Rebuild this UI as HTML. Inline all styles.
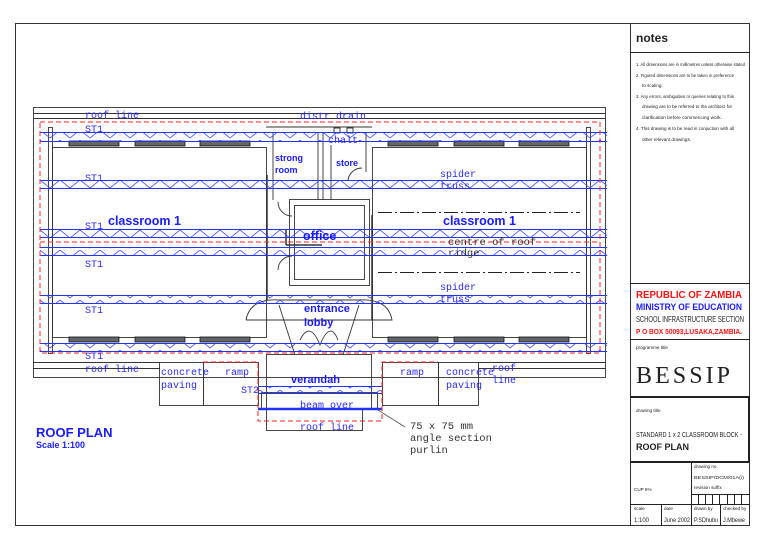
<!DOCTYPE html>
<html><head><meta charset="utf-8"><style>
html,body{margin:0;padding:0;background:#fff}
svg{display:block}
.b{fill:#1a1aff;font-family:"Liberation Sans",sans-serif}
.t{fill:#2a2aff;font-family:"Liberation Mono",monospace;font-size:10px}
.k{fill:#222;font-family:"Liberation Sans",sans-serif}
</style></head><body>
<svg width="768" height="543" viewBox="0 0 768 543" xmlns="http://www.w3.org/2000/svg">
<defs>
<pattern id="zz" x="40" y="0" width="20" height="10" patternUnits="userSpaceOnUse">
<polyline points="0,0 10,8 20,0" fill="none" stroke="#3344ff" stroke-width="0.8"/>
</pattern>
</defs>
<rect x="15.5" y="23.5" width="734" height="502" fill="none" stroke="#333" stroke-width="1"/>
<line x1="630.5" y1="23" x2="630.5" y2="526" stroke="#333"/>
<g stroke="#333" fill="none" stroke-width="0.9">
<rect x="33.5" y="107.5" width="572" height="270"/>
<line x1="33" y1="113.5" x2="606" y2="113.5"/>
<line x1="33" y1="118.5" x2="606" y2="118.5"/>
<line x1="33" y1="362.5" x2="160" y2="362.5"/>
<line x1="33" y1="368.5" x2="160" y2="368.5"/>
<line x1="478" y1="362.5" x2="606" y2="362.5"/>
<line x1="478" y1="368.5" x2="606" y2="368.5"/>
<rect x="159.5" y="362.5" width="44" height="43"/>
<rect x="203.5" y="362.5" width="55" height="43"/>
<rect x="382.5" y="362.5" width="56" height="43"/>
<rect x="438.5" y="362.5" width="40" height="43"/>
<rect x="48.5" y="127.5" width="4" height="226"/>
<rect x="586.5" y="127.5" width="4" height="226"/>
<rect x="52.5" y="147.5" width="214" height="190"/>
<rect x="372.5" y="147.5" width="214" height="190"/>
<line x1="266" y1="127" x2="372" y2="127"/>
<line x1="273" y1="133" x2="273" y2="200"/>
<line x1="318" y1="133" x2="318" y2="200"/>
<line x1="323" y1="133" x2="323" y2="200"/>
<line x1="331" y1="145" x2="331" y2="200"/>
<line x1="366" y1="133" x2="366" y2="172"/>
<rect x="289.5" y="199.5" width="80" height="86"/>
<rect x="294.5" y="205.5" width="70" height="74"/>
<path d="M246 320 Q250 298 280 300 L358 300 Q388 298 392 320 L246 320"/>
<path d="M279 305 L295 355 M359 305 L343 355 M300 340 Q310 320 320 345 Q330 320 338 340"/>
<rect x="266.5" y="354.5" width="105" height="55"/>
<rect x="261.5" y="392.5" width="116" height="16"/>
<rect x="266.5" y="408.5" width="96" height="22"/>
<path d="M278 202 A14 14 0 0 0 292 216 M278 270 A14 14 0 0 1 292 256 M348 180 A14 14 0 0 1 362 168"/>
<line x1="286" y1="230" x2="286" y2="245" stroke-width="1.5"/>
<line x1="286" y1="245" x2="322" y2="245" stroke-width="1.5"/>
<line x1="267" y1="175" x2="267" y2="300" stroke-width="1.5"/>
<line x1="372" y1="215" x2="372" y2="320" stroke-width="1.5"/>
<line x1="378" y1="410" x2="405" y2="427" stroke="#555"/>
</g>
<g fill="#666" stroke="#111" stroke-width="0.8">
<rect x="69" y="141" width="50" height="5"/><rect x="135" y="141" width="50" height="5"/><rect x="200" y="141" width="50" height="5"/>
<rect x="388" y="141" width="50" height="5"/><rect x="454" y="141" width="50" height="5"/><rect x="519" y="141" width="50" height="5"/>
<rect x="69" y="337" width="50" height="5"/><rect x="135" y="337" width="50" height="5"/><rect x="200" y="337" width="50" height="5"/>
<rect x="388" y="337" width="50" height="5"/><rect x="454" y="337" width="50" height="5"/><rect x="519" y="337" width="50" height="5"/>
<rect x="334" y="128" width="6" height="5" fill="#fff"/><rect x="347" y="128" width="6" height="5" fill="#fff"/>
</g>
<g stroke="#222" stroke-width="0.9" stroke-dasharray="14 3 2 3">
<line x1="378" y1="212.5" x2="580" y2="212.5"/>
<line x1="378" y1="272.5" x2="580" y2="272.5"/>
</g>
<g stroke="#2233ff" stroke-width="1.1">
<rect x="40" y="132" width="567" height="9" fill="url(#zz)" stroke="none"/>
<line x1="40" y1="132.5" x2="607" y2="132.5"/><line x1="40" y1="141.5" x2="607" y2="141.5"/>
<rect x="40" y="180" width="567" height="8" fill="url(#zz)" stroke="none"/>
<line x1="40" y1="180.5" x2="607" y2="180.5"/><line x1="40" y1="188.5" x2="607" y2="188.5"/>
<rect x="40" y="229" width="567" height="8" fill="url(#zz)" stroke="none"/>
<line x1="40" y1="229.5" x2="607" y2="229.5"/><line x1="40" y1="237.5" x2="607" y2="237.5"/>
<rect x="40" y="248" width="567" height="8" fill="url(#zz)" stroke="none"/>
<line x1="40" y1="247.5" x2="607" y2="247.5"/><line x1="40" y1="255.5" x2="607" y2="255.5"/>
<rect x="40" y="296" width="567" height="8" fill="url(#zz)" stroke="none"/>
<line x1="40" y1="295.5" x2="607" y2="295.5"/><line x1="40" y1="303.5" x2="607" y2="303.5"/>
<rect x="40" y="343" width="567" height="8" fill="url(#zz)" stroke="none"/>
<line x1="40" y1="343.5" x2="607" y2="343.5"/><line x1="40" y1="351.5" x2="607" y2="351.5"/>
<rect x="258" y="386" width="124" height="7" fill="url(#zz)" stroke="none"/>
<line x1="258" y1="386.5" x2="382" y2="386.5"/><line x1="258" y1="393.5" x2="382" y2="393.5"/>
<line x1="258" y1="409" x2="382" y2="409" stroke-width="2.5"/>
</g>
<g stroke="#ff2222" stroke-width="1" fill="none" stroke-dasharray="5 3">
<rect x="40" y="122" width="560" height="231"/>
<line x1="40" y1="242" x2="600" y2="242"/>
<path d="M203 362 H258 V421 H382 V362 H438"/>
</g>
<g class="t">
<text x="85" y="118">roof line</text><text x="300" y="119">distr drain</text>
<text x="85" y="132">ST1</text><text x="85" y="181">ST1</text><text x="85" y="229">ST1</text>
<text x="85" y="267">ST1</text><text x="85" y="313">ST1</text><text x="85" y="359">ST1</text>
<text x="85" y="372">roof line</text>
<text x="328" y="143">chalt</text>
<text x="440" y="177">spider</text><text x="440" y="189">truss</text>
<text x="440" y="290">spider</text><text x="440" y="302">truss</text>
<text x="161" y="375">concrete</text><text x="161" y="388">paving</text>
<text x="225" y="375">ramp</text><text x="241" y="393">ST2</text>
<text x="400" y="375">ramp</text><text x="446" y="375">concrete</text><text x="446" y="388">paving</text>
<text x="492" y="371">roof</text><text x="492" y="383">line</text>
<text x="300" y="408">beam over</text><text x="300" y="430">roof line</text>
</g>
<g fill="#333" font-family="Liberation Mono,monospace" font-size="10.5">
<text x="448" y="245">centre of roof</text><text x="448" y="256">ridge</text>
<text x="410" y="429">75 x 75 mm</text><text x="410" y="441">angle section</text><text x="410" y="453">purlin</text>
</g>
<g class="b" font-weight="bold">
<text x="275" y="161" font-size="9">strong</text><text x="275" y="173" font-size="9">room</text>
<text x="336" y="166" font-size="9">store</text>
<text x="108" y="225" font-size="12.5">classroom 1</text>
<text x="443" y="225" font-size="12.5">classroom 1</text>
<text x="303" y="240" font-size="12.5">office</text>
<text x="304" y="312" font-size="11">entrance</text><text x="304" y="326" font-size="11">lobby</text>
<text x="291" y="383" font-size="11">verandah</text>
<text x="36" y="437" font-size="13">ROOF PLAN</text>
<text x="36" y="448" font-size="9">Scale 1:100</text>
</g>
<g stroke="#222" fill="none">
<line x1="630" y1="52.5" x2="750" y2="52.5"/>
<line x1="630" y1="283.5" x2="750" y2="283.5"/>
<line x1="630" y1="339.5" x2="750" y2="339.5"/>
<line x1="630" y1="397" x2="750" y2="397" stroke-width="2"/>
<line x1="630" y1="462" x2="750" y2="462" stroke-width="2"/>
<line x1="749" y1="397" x2="749" y2="462" stroke-width="2"/>
<line x1="691.5" y1="462" x2="691.5" y2="526"/>
<line x1="630" y1="504.5" x2="750" y2="504.5"/>
<line x1="691" y1="494.5" x2="750" y2="494.5"/>
<line x1="661.5" y1="504" x2="661.5" y2="526"/>
<line x1="720.5" y1="504" x2="720.5" y2="526"/>
<path d="M698.5 494V504M705.5 494V504M712.5 494V504M719.5 494V504M727.5 494V504M734.5 494V504M741.5 494V504"/>
</g>
<g class="k">
<text x="636" y="42" font-size="12" font-weight="bold">notes</text>
<g font-size="4.6">
<text x="636" y="66" textLength="109" lengthAdjust="spacingAndGlyphs">1. All dimensions are in millimetres unless otherwise stated</text>
<text x="636" y="77" textLength="98" lengthAdjust="spacingAndGlyphs">2. Figured dimensions are to be taken in preference</text>
<text x="642" y="87">to scaling.</text>
<text x="636" y="98" textLength="98" lengthAdjust="spacingAndGlyphs">3. Any errors, ambiguities or queries relating to this</text>
<text x="642" y="108" textLength="90" lengthAdjust="spacingAndGlyphs">drawing are to be referred to the architect for</text>
<text x="642" y="119" textLength="80" lengthAdjust="spacingAndGlyphs">clarification before commencing work.</text>
<text x="636" y="130" textLength="98" lengthAdjust="spacingAndGlyphs">4. This drawing is to be read in conjuction with all</text>
<text x="642" y="141">other relevant drawings.</text>
<text x="636" y="349">programme title</text>
<text x="636" y="412">drawing title</text>
<text x="694" y="468">drawing no.</text>
<text x="694" y="479" textLength="50" lengthAdjust="spacingAndGlyphs">BESSIP/DCM/01A(i)</text>
<text x="694" y="489">revision suffix</text>
<text x="634" y="491">CUP 5%</text>
<text x="634" y="510">scale</text><text x="664" y="510">date</text><text x="694" y="510">drawn by</text><text x="723" y="510">checked by</text>
<text x="634" y="522" font-size="6">1:100</text><text x="664" y="522" font-size="6" textLength="26" lengthAdjust="spacingAndGlyphs">June 2002</text><text x="694" y="522" font-size="6" textLength="24" lengthAdjust="spacingAndGlyphs">P.SDhubu</text><text x="723" y="522" font-size="6" textLength="22" lengthAdjust="spacingAndGlyphs">J.Mbewe</text>
</g>
<text x="636" y="298" font-size="10" font-weight="bold" fill="#ff1111" textLength="106" lengthAdjust="spacingAndGlyphs">REPUBLIC  OF  ZAMBIA</text>
<text x="636" y="310" font-size="9.5" font-weight="bold" fill="#1a1aff" textLength="106" lengthAdjust="spacingAndGlyphs">MINISTRY OF EDUCATION</text>
<text x="636" y="322" font-size="8" textLength="108" lengthAdjust="spacingAndGlyphs">SCHOOL INFRASTRUCTURE SECTION</text>
<text x="636" y="334" font-size="7" font-weight="bold" fill="#ff1111" textLength="106" lengthAdjust="spacingAndGlyphs">P O BOX 50093,LUSAKA,ZAMBIA.</text>
<text x="636" y="383" font-size="24" font-family="Liberation Serif,serif" textLength="94" lengthAdjust="spacing">BESSIP</text>
<text x="636" y="437" font-size="7" textLength="106" lengthAdjust="spacingAndGlyphs">STANDARD 1 x 2 CLASSROOM BLOCK -</text>
<text x="636" y="450" font-size="9" font-weight="bold">ROOF PLAN</text>
</g>
</svg>
</body></html>
